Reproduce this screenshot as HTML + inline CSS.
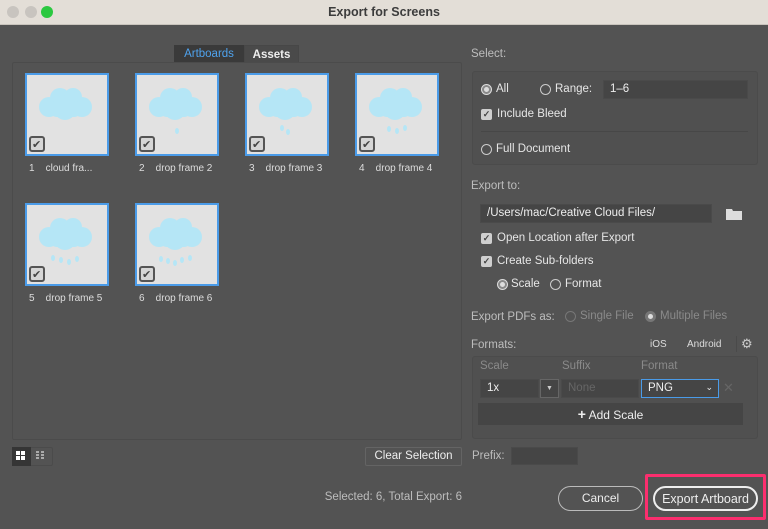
<!DOCTYPE html>
<html><head><meta charset="utf-8"><style>
*{box-sizing:border-box;margin:0;padding:0}
body{width:768px;height:529px;background:#535353;font-family:"Liberation Sans",Arial,sans-serif;font-size:11px;color:#e6e6e6;position:relative;overflow:hidden}
.a{position:absolute}
.title{left:0;top:0;width:768px;height:25px;background:#e3ded7;border-bottom:1px solid #c9c4bd}
.tl{top:6px;width:12px;height:12px;border-radius:50%;background:#c8c4bf}
.thumb{width:84px;height:83px;border:2px solid #4a9be8;background:#e2e2e2}
.cb{left:2px;bottom:2px;width:16px;height:16px;border:2px solid #555;border-radius:3px;background:#d6d6d6}
.lbl{font-size:10px;color:#ddd}
.box{border:1px solid #4b4b4b;border-radius:3px;background:#505050}
.inp{background:#454545;border:1px solid #4a4a4a;color:#eee;padding-left:6px;line-height:17px}
.rad{width:11px;height:11px;border-radius:50%;border:1px solid #ccc}
.rad.on::after{content:"";position:absolute;left:2px;top:2px;width:5px;height:5px;border-radius:50%;background:#ddd}
.rad.on{background:#888;border-color:#ddd}
.chk{width:11px;height:11px;border-radius:2px;background:#cfcfcf;color:#444;font-size:9px;line-height:11px;text-align:center;font-weight:bold}
.gray{color:#bdbdbd}
.dim{color:#8a8a8a}
.btn{border:1px solid #ddd;border-radius:13px;text-align:center;color:#eee;font-size:12px}
</style></head><body>
<div class="a title"></div>
<div class="a tl" style="left:7px"></div>
<div class="a tl" style="left:25px"></div>
<div class="a tl" style="left:41px;background:#2bc840"></div>
<div class="a" style="left:0;width:768px;top:5px;text-align:center;color:#3c3c3c;font-size:12.5px;font-weight:bold">Export for Screens</div>

<div class="a" style="left:174px;top:45px;width:70px;height:18px;background:#3a3a3a;color:#4fa3ee;font-size:11.5px;text-align:center;line-height:18px">Artboards</div>
<div class="a" style="left:244px;top:45px;width:55px;height:18px;background:#4a4a4a;color:#eee;font-size:11.5px;font-weight:bold;text-align:center;line-height:18px;border:1px solid #474747">Assets</div>
<div class="a" style="left:12px;top:62px;width:450px;height:378px;border:1px solid #4b4b4b;border-radius:2px"></div>

<svg width="0" height="0" style="position:absolute"><defs>
<g id="cl" fill="#b5e6f6"><circle cx="22" cy="32" r="10"/><circle cx="33" cy="23" r="10"/><circle cx="46" cy="22" r="9"/><circle cx="55" cy="32" r="10"/><circle cx="38" cy="34" r="11"/><rect x="22" y="26" width="33" height="16" rx="8"/></g>
</defs></svg>

<div class="a thumb" style="left:25px;top:73px"><svg width="80" height="79"><use href="#cl"/></svg><div class="a cb"></div><div class="a" style="left:5px;bottom:3px;color:#444;font-size:11px">✔</div></div>
<div class="a thumb" style="left:135px;top:73px"><svg width="80" height="79"><use href="#cl"/><ellipse cx="40" cy="56" rx="2" ry="3" fill="#b5e6f6"/></svg><div class="a cb"></div><div class="a" style="left:5px;bottom:3px;color:#444;font-size:11px">✔</div></div>
<div class="a thumb" style="left:245px;top:73px"><svg width="80" height="79"><use href="#cl"/><ellipse cx="35" cy="53" rx="2" ry="3" fill="#b5e6f6"/><ellipse cx="41" cy="57" rx="2" ry="3" fill="#b5e6f6"/></svg><div class="a cb"></div><div class="a" style="left:5px;bottom:3px;color:#444;font-size:11px">✔</div></div>
<div class="a thumb" style="left:355px;top:73px"><svg width="80" height="79"><use href="#cl"/><ellipse cx="32" cy="54" rx="2" ry="3" fill="#b5e6f6"/><ellipse cx="40" cy="56" rx="2" ry="3" fill="#b5e6f6"/><ellipse cx="48" cy="53" rx="2" ry="3" fill="#b5e6f6"/></svg><div class="a cb"></div><div class="a" style="left:5px;bottom:3px;color:#444;font-size:11px">✔</div></div>
<div class="a thumb" style="left:25px;top:203px"><svg width="80" height="79"><use href="#cl"/><ellipse cx="26" cy="53" rx="2" ry="3" fill="#b5e6f6"/><ellipse cx="34" cy="55" rx="2" ry="3" fill="#b5e6f6"/><ellipse cx="42" cy="57" rx="2" ry="3" fill="#b5e6f6"/><ellipse cx="50" cy="54" rx="2" ry="3" fill="#b5e6f6"/></svg><div class="a cb"></div><div class="a" style="left:5px;bottom:3px;color:#444;font-size:11px">✔</div></div>
<div class="a thumb" style="left:135px;top:203px"><svg width="80" height="79"><use href="#cl"/><ellipse cx="24" cy="54" rx="2" ry="3" fill="#b5e6f6"/><ellipse cx="31" cy="56" rx="2" ry="3" fill="#b5e6f6"/><ellipse cx="38" cy="58" rx="2" ry="3" fill="#b5e6f6"/><ellipse cx="45" cy="55" rx="2" ry="3" fill="#b5e6f6"/><ellipse cx="53" cy="53" rx="2" ry="3" fill="#b5e6f6"/></svg><div class="a cb"></div><div class="a" style="left:5px;bottom:3px;color:#444;font-size:11px">✔</div></div>

<div class="a lbl" style="left:29px;top:163px">1&nbsp;&nbsp;&nbsp;&nbsp;cloud fra...</div>
<div class="a lbl" style="left:139px;top:163px">2&nbsp;&nbsp;&nbsp;&nbsp;drop frame 2</div>
<div class="a lbl" style="left:249px;top:163px">3&nbsp;&nbsp;&nbsp;&nbsp;drop frame 3</div>
<div class="a lbl" style="left:359px;top:163px">4&nbsp;&nbsp;&nbsp;&nbsp;drop frame 4</div>
<div class="a lbl" style="left:29px;top:293px">5&nbsp;&nbsp;&nbsp;&nbsp;drop frame 5</div>
<div class="a lbl" style="left:139px;top:293px">6&nbsp;&nbsp;&nbsp;&nbsp;drop frame 6</div>

<div class="a" style="left:12px;top:447px;width:41px;height:19px;border:1px solid #4b4b4b;border-radius:2px"></div>
<div class="a" style="left:12px;top:447px;width:19px;height:19px;background:#353535"></div>
<svg class="a" style="left:15px;top:451px" width="36" height="11"><g fill="#fff"><rect x="1" y="0" width="4" height="4"/><rect x="6" y="0" width="4" height="4"/><rect x="1" y="5" width="4" height="4"/><rect x="6" y="5" width="4" height="4"/></g><g fill="#aaa"><rect x="21" y="0" width="3" height="2"/><rect x="21" y="3" width="3" height="2"/><rect x="21" y="6" width="3" height="2"/><rect x="26" y="0" width="3" height="2"/><rect x="26" y="3" width="3" height="2"/><rect x="26" y="6" width="3" height="2"/></g></svg>
<div class="a" style="left:365px;top:447px;width:97px;height:19px;border:1px solid #646464;border-radius:2px;text-align:center;line-height:17px;font-size:11.5px;color:#eee">Clear Selection</div>
<div class="a gray" style="left:300px;top:491px;width:162px;text-align:right;font-size:11.5px">Selected: 6, Total Export: 6</div>

<div class="a gray" style="left:471px;top:48px;font-size:11.5px">Select:</div>
<div class="a box" style="left:472px;top:71px;width:286px;height:94px"></div>
<div class="a rad on" style="left:481px;top:84px"></div><div class="a" style="left:496px;top:83px;font-size:11.5px">All</div>
<div class="a rad" style="left:540px;top:84px"></div><div class="a" style="left:555px;top:83px;font-size:11.5px">Range:</div>
<div class="a inp" style="left:603px;top:80px;width:145px;height:19px;font-size:11.5px">1–6</div>
<div class="a chk" style="left:481px;top:109px">✓</div><div class="a" style="left:497px;top:108px;font-size:11.5px">Include Bleed</div>
<div class="a" style="left:481px;top:131px;width:267px;height:1px;background:#474747"></div>
<div class="a rad" style="left:481px;top:144px"></div><div class="a" style="left:496px;top:143px;font-size:11.5px">Full Document</div>

<div class="a gray" style="left:471px;top:180px;font-size:11.5px">Export to:</div>
<div class="a inp" style="left:480px;top:204px;width:232px;height:19px;font-size:11.5px">/Users/mac/Creative Cloud Files/</div>
<svg class="a" style="left:726px;top:208px" width="16" height="12"><path d="M0 1h6l1 2h9v9H0z" fill="#ddd"/></svg>
<div class="a chk" style="left:481px;top:233px">✓</div><div class="a" style="left:497px;top:232px;font-size:11.5px">Open Location after Export</div>
<div class="a chk" style="left:481px;top:256px">✓</div><div class="a" style="left:497px;top:255px;font-size:11.5px">Create Sub-folders</div>
<div class="a rad on" style="left:497px;top:279px"></div><div class="a" style="left:511px;top:278px;font-size:11.5px">Scale</div>
<div class="a rad" style="left:550px;top:279px"></div><div class="a" style="left:565px;top:278px;font-size:11.5px">Format</div>

<div class="a gray" style="left:471px;top:311px;font-size:11.5px">Export PDFs as:</div>
<div class="a rad" style="left:565px;top:311px;border-color:#777"></div><div class="a dim" style="left:580px;top:310px;font-size:11.5px">Single File</div>
<div class="a rad on" style="left:645px;top:311px;background:#777;border-color:#777"></div><div class="a dim" style="left:660px;top:310px;font-size:11.5px">Multiple Files</div>

<div class="a gray" style="left:471px;top:339px;font-size:11.5px">Formats:</div>
<div class="a" style="left:650px;top:339px;font-size:10px;color:#ddd">iOS</div>
<div class="a" style="left:687px;top:339px;font-size:10px;color:#ddd">Android</div>
<div class="a" style="left:736px;top:336px;width:1px;height:16px;background:#4a4a4a"></div>
<div class="a" style="left:741px;top:336px;font-size:13px;color:#ccc">⚙</div>
<div class="a box" style="left:472px;top:356px;width:286px;height:83px"></div>
<div class="a dim" style="left:480px;top:360px;font-size:11.5px">Scale</div>
<div class="a dim" style="left:562px;top:360px;font-size:11.5px">Suffix</div>
<div class="a dim" style="left:641px;top:360px;font-size:11.5px">Format</div>
<div class="a inp" style="left:480px;top:379px;width:59px;height:19px;font-size:11.5px">1x</div>
<div class="a" style="left:540px;top:379px;width:19px;height:19px;border:1px solid #666;background:#454545;color:#ccc;font-size:7px;text-align:center;line-height:17px">▼</div>
<div class="a inp" style="left:561px;top:379px;width:78px;height:19px;font-size:11.5px;color:#666">None</div>
<div class="a inp" style="left:641px;top:379px;width:78px;height:19px;font-size:11.5px;border:1px solid #4a9be8">PNG<span style="position:absolute;right:5px;top:-1px;font-size:9px">&#8964;</span></div>
<div class="a" style="left:723px;top:380px;color:#666;font-size:13px">✕</div>
<div class="a" style="left:478px;top:403px;width:265px;height:22px;background:#454545;text-align:center;line-height:22px;font-size:12px;color:#eee"><b style="font-size:14px">+</b> Add Scale</div>

<div class="a gray" style="left:472px;top:450px;font-size:11.5px">Prefix:</div>
<div class="a inp" style="left:511px;top:447px;width:67px;height:18px"></div>

<div class="a btn" style="left:558px;top:486px;width:85px;height:25px;line-height:23px;border-color:#bbb">Cancel</div>
<div class="a" style="left:645px;top:474px;width:121px;height:46px;border:3px solid #fb2e6e;border-radius:2px"></div>
<div class="a btn" style="left:653px;top:486px;width:105px;height:25px;line-height:22px;border:2px solid #eee;font-size:12.5px">Export Artboard</div>
</body></html>
